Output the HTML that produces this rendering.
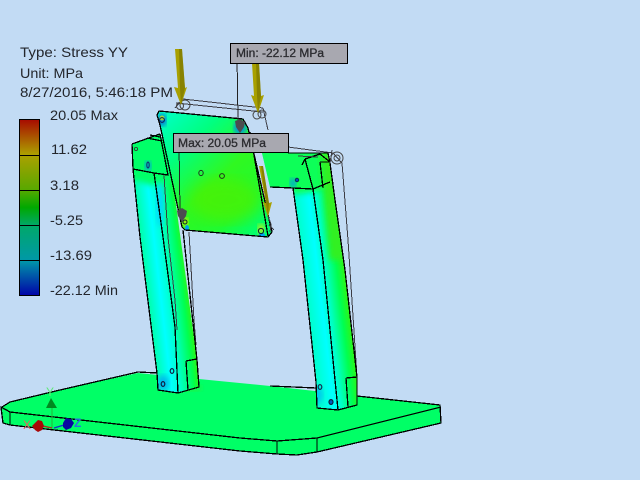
<!DOCTYPE html>
<html>
<head>
<meta charset="utf-8">
<style>
html,body{margin:0;padding:0;background:#c2dbf4;width:640px;height:480px;overflow:hidden}
svg{display:block}
text{font-family:"Liberation Sans",sans-serif}
.l{font-size:14px;fill:#23262c}
.b{font-size:11.5px;fill:#2c2c30;stroke:#2c2c30;stroke-width:.3}
.k{fill:none;stroke:#000;stroke-width:1.3;shape-rendering:crispEdges}
.g{fill:none;stroke:#3c3c44;stroke-width:1;shape-rendering:crispEdges}
</style>
</head>
<body>
<svg width="640" height="480" viewBox="0 0 640 480" xmlns="http://www.w3.org/2000/svg">
<defs>
<linearGradient id="scale" gradientUnits="userSpaceOnUse" x1="0" y1="119" x2="0" y2="296">
<stop offset="0" stop-color="#a80800"/><stop offset=".2" stop-color="#aca000"/><stop offset=".4" stop-color="#58a800"/><stop offset=".5" stop-color="#00a800"/><stop offset=".6" stop-color="#00a868"/><stop offset=".8" stop-color="#0098a8"/><stop offset="1" stop-color="#0000a8"/>
</linearGradient>
<linearGradient id="legL" gradientUnits="userSpaceOnUse" x1="148" y1="292" x2="191" y2="287">
<stop offset="0" stop-color="#00ffb0"/><stop offset=".28" stop-color="#00ffff"/><stop offset=".42" stop-color="#00ffe0"/><stop offset=".6" stop-color="#00ffa0"/><stop offset=".8" stop-color="#00ff50"/><stop offset="1" stop-color="#40f000"/>
</linearGradient>
<linearGradient id="legR" gradientUnits="userSpaceOnUse" x1="309" y1="304" x2="351" y2="299">
<stop offset="0" stop-color="#00ffd0"/><stop offset=".3" stop-color="#00ffff"/><stop offset=".5" stop-color="#00ffc0"/><stop offset=".75" stop-color="#00ff50"/><stop offset="1" stop-color="#40f000"/>
</linearGradient>
<linearGradient id="plate" gradientUnits="userSpaceOnUse" x1="160" y1="120" x2="262" y2="230">
<stop offset="0" stop-color="#00ffc0"/><stop offset=".25" stop-color="#00ff80"/><stop offset=".55" stop-color="#30f820"/><stop offset=".8" stop-color="#20fa30"/><stop offset="1" stop-color="#00ff70"/>
</linearGradient>
<filter id="b3"><feGaussianBlur stdDeviation="3"/></filter>
<filter id="b6"><feGaussianBlur stdDeviation="7"/></filter>
<clipPath id="cL"><polygon points="132,144 157,135 160,134 170,160 197,360 199,387 178,393 158,390 157,373 140,237 133,169"/></clipPath>
<clipPath id="cR"><polygon points="293,188 270,187 262,153 328,153 330,163 335,200 345,270 357,377 357,405 338,410 317,408 316,382 303,260"/></clipPath>
<clipPath id="cP"><polygon points="157,115 159,111 243,119 248,128 272,232 268,237 185,230 182,227 160,125"/></clipPath>
</defs>

<!-- ghost outlines behind -->
<path class="g" d="M288,147 L333,153 L342,163 L348,240 L357,377 M189,232 L194,320 L196,345"/>

<!-- base -->
<polygon points="2,407 10,402 60,390 138,373 270,386 440,405 441,407 441,423 317,452 297,455 277,454 240,451 10,425 2,422" fill="#00ff66"/>
<path class="k" d="M2,407 L10,402 L60,390 L138,372 L158,373 M316,388 L270,386 M357,396 L440,405 L441,423 L317,452 L297,455 L277,454 L240,451 L10,425 L3,423 L1,407 L10,412 L240,438 L277,441 L317,438 L441,407 M10,412 L10,425 M277,441 L277,454 M317,438 L317,452"/>
<ellipse cx="190" cy="388" rx="12" ry="3" fill="#20f040" filter="url(#b3)"/>

<!-- left leg -->
<g clip-path="url(#cL)">
<rect x="120" y="125" width="90" height="275" fill="url(#legL)"/>
<polygon points="120,125 180,125 182,180 150,185 120,176" fill="#00ff68" filter="url(#b3)"/>
<ellipse cx="148" cy="166" rx="3" ry="5" fill="#0090f0" filter="url(#b3)"/>
<ellipse cx="160" cy="205" rx="4" ry="22" fill="#00d8ff" filter="url(#b3)"/>
<ellipse cx="163" cy="383" rx="6" ry="8" fill="#00b8f0" filter="url(#b3)"/>
</g>
<path class="k" d="M132,144 L157,135 L160,134 M132,144 L133,169 L140,237 L157,373 L158,390 L178,393 L199,387 L197,360 L183,230 M133,169 L154,173 L168,175 L160,134 M154,173 L163,237 L175,327 L178,393 M186,361 L197,359 M186,361 L188,390 M147,138 L162,141 M150,135 L160,137"/>
<path class="g" d="M164,175 L168,237 L175,300 L177,330"/>
<ellipse cx="172" cy="371" rx="1.8" ry="2.4" fill="none" stroke="#102040" stroke-width="1.2"/>
<ellipse cx="163" cy="384" rx="1.8" ry="2.4" fill="none" stroke="#102040" stroke-width="1.2"/>
<circle cx="136" cy="149" r="1.6" fill="none" stroke="#333" stroke-width=".8"/>
<ellipse cx="148" cy="165" rx="1.2" ry="3" fill="none" stroke="#103070" stroke-width="1"/>

<!-- crossbar + right leg -->
<g clip-path="url(#cR)">
<rect x="255" y="145" width="110" height="270" fill="url(#legR)"/>
<polygon points="255,145 345,145 340,188 300,194 255,190" fill="#08ff58" filter="url(#b3)"/>
<polygon points="320,150 336,150 348,260 330,260" fill="#30f020" filter="url(#b3)"/>
<ellipse cx="293" cy="183" rx="3" ry="5" fill="#0090f0" filter="url(#b3)"/>
<ellipse cx="316" cy="395" rx="7" ry="9" fill="#00c8f0" filter="url(#b3)"/>
</g>
<path class="k" d="M270,187 L293,188 L313,189 L330,182 M293,188 L303,260 L316,382 L317,408 L338,410 L357,405 L357,377 L345,270 L335,200 L330,163 L328,153 L288,153 M313,189 L323,260 L333,360 L338,410 M305,159 L320,154 L330,162 M305,159 L313,189 M302,165 L305,159 M320,162 L323,188 M320,162 L330,162 M346,378 L357,377 M346,378 L348,407"/>
<path class="g" d="M298,156 L318,157 M330,163 L332,150"/>
<circle cx="337" cy="158" r="6" fill="none" stroke="#444" stroke-width="1"/>
<circle cx="337" cy="158" r="3" fill="none" stroke="#444" stroke-width="1"/>
<circle cx="297" cy="180" r="1.8" fill="#0050c0" stroke="#102040" stroke-width=".8"/>
<ellipse cx="320" cy="387" rx="1.8" ry="2.4" fill="none" stroke="#103050" stroke-width="1.2"/>
<ellipse cx="331" cy="402" rx="2" ry="2.4" fill="#0060c0" stroke="#102040" stroke-width="1.2"/>

<!-- plate -->
<g clip-path="url(#cP)">
<rect x="150" y="105" width="130" height="140" fill="url(#plate)"/>
<ellipse cx="225" cy="200" rx="35" ry="22" fill="#50f000" opacity=".7" filter="url(#b6)"/>
<ellipse cx="162" cy="120" rx="4" ry="6" fill="#0050e0" filter="url(#b3)"/>
<ellipse cx="240" cy="128" rx="6" ry="6" fill="#0080f0" filter="url(#b3)"/>
<ellipse cx="185" cy="222" rx="3" ry="4" fill="#f0f000" filter="url(#b3)"/>
<ellipse cx="261" cy="229" rx="3" ry="5" fill="#f0f000" filter="url(#b3)"/>
<ellipse cx="187" cy="228" rx="2" ry="3" fill="#00a0f0"/>
<ellipse cx="262" cy="235" rx="3" ry="2" fill="#00a0f0"/>
<ellipse cx="162" cy="118" rx="2.500" ry="2.500" fill="#e0f000" opacity=".7"/>
</g>
<path class="k" d="M160,125 L157,115 L159,111 L243,119 L248,128 L272,232 L268,237 L185,230 L182,227 L160,125 M250,132 L268,236"/>
<circle cx="162" cy="120" r="2.400" fill="none" stroke="#102050" stroke-width="1"/>
<circle cx="261" cy="231" r="2.600" fill="none" stroke="#102030" stroke-width="1"/>
<circle cx="185" cy="222" r="2" fill="none" stroke="#102030" stroke-width="1"/>
<ellipse cx="201" cy="173" rx="2.200" ry="2.600" fill="none" stroke="#203020" stroke-width="1"/>
<circle cx="222" cy="176" r="2.400" fill="none" stroke="#203020" stroke-width="1"/>

<!-- upper ghost -->
<path class="g" d="M175,108 L183,99 L263,108 M176,103 L263,112 M263,108 L268,130"/>
<circle cx="180" cy="106" r="3.500" fill="none" stroke="#444" stroke-width="1"/>
<circle cx="185" cy="105" r="5" fill="none" stroke="#444" stroke-width="1"/>
<circle cx="257" cy="115" r="4" fill="none" stroke="#444" stroke-width="1"/>
<circle cx="262" cy="114" r="4" fill="none" stroke="#444" stroke-width="1"/>
<path class="g" d="M268,216 L271,224 L270,232 M269,225 L274,230"/>

<!-- arrows -->
<g fill="#a8a000">
<polygon points="175,49 182,49 185,88 187,87 181,105 174,87 178,88"/>
<polygon points="252,63 259,63 261,96 264,95 258,113 251,95 254,96"/>
<polygon points="259,166 263,166 269,203 272,202 268,217 263,202 266,203"/>
</g>
<g fill="#6e6a00" opacity=".55">
<polygon points="179,49 182,49 185,88 181,105 180,88"/>
<polygon points="256,63 259,63 261,96 258,113 257,96"/>
<polygon points="261,166 263,166 269,203 268,217 266,203"/>
</g>

<!-- min/max markers -->
<path d="M237,55 L238,122" stroke="#222" stroke-width="1" fill="none" shape-rendering="crispEdges"/>
<path d="M179,143 L180,212" stroke="#222" stroke-width="1" fill="none" shape-rendering="crispEdges"/>
<polygon points="235,121 240,119 245,122 244,127 240,133 236,127" fill="#4c4c50"/>
<polygon points="177,211 182,208 187,211 186,216 182,222 178,216" fill="#4c4c50"/>

<!-- labels -->
<rect x="230.500" y="43.500" width="117" height="20" fill="#a8a8b0" stroke="#000" stroke-width="1"/>
<text class="b" x="236" y="57" textLength="88" lengthAdjust="spacingAndGlyphs">Min: -22.12 MPa</text>
<rect x="173.500" y="133.500" width="115" height="19" fill="#a8a8b0" stroke="#000" stroke-width="1"/>
<text class="b" x="178" y="147" textLength="88" lengthAdjust="spacingAndGlyphs">Max: 20.05 MPa</text>

<!-- legend -->
<text class="l" x="20" y="57" textLength="108" lengthAdjust="spacingAndGlyphs">Type: Stress YY</text>
<text class="l" x="20" y="78" textLength="63" lengthAdjust="spacingAndGlyphs">Unit: MPa</text>
<text class="l" x="20" y="97" textLength="153" lengthAdjust="spacingAndGlyphs">8/27/2016, 5:46:18 PM</text>
<rect x="19.500" y="119.500" width="20" height="176" fill="url(#scale)" stroke="#000" stroke-width="1"/>
<path d="M19,155.500H40M19,190.500H40M19,225.500H40M19,260.500H40" stroke="#000" stroke-width="1" fill="none"/>
<text class="l" x="50" y="120" textLength="68" lengthAdjust="spacingAndGlyphs">20.05 Max</text>
<text class="l" x="51" y="154" textLength="36" lengthAdjust="spacingAndGlyphs">11.62</text>
<text class="l" x="50" y="190" textLength="29" lengthAdjust="spacingAndGlyphs">3.18</text>
<text class="l" x="50" y="225" textLength="33" lengthAdjust="spacingAndGlyphs">-5.25</text>
<text class="l" x="50" y="260" textLength="42" lengthAdjust="spacingAndGlyphs">-13.69</text>
<text class="l" x="50" y="295" textLength="68" lengthAdjust="spacingAndGlyphs">-22.12 Min</text>

<!-- triad -->
<path d="M52,408V428" stroke="#20c040" stroke-width="1.200" fill="none"/>
<path d="M43,426L52,428" stroke="#c02020" stroke-width="1.200" fill="none"/>
<path d="M54,428L64,425" stroke="#1030d0" stroke-width="1.200" fill="none"/>
<polygon points="46,408 57,408 51,398" fill="#008a20"/>
<polygon points="32,426 36,422 38,420 42,421 44,426 42,430 38,432 35,430" fill="#a80808"/>
<polygon points="63,423 66,418 71,419 74,423 71,428 66,430 63,427" fill="#0808a0"/>
<text x="46" y="396" font-size="12" fill="#60e878">Y</text>
<text x="23" y="429" font-size="12" fill="#e86060">X</text>
<text x="74" y="427" font-size="12" font-weight="bold" fill="#2870e0">Z</text>
</svg>
</body>
</html>
